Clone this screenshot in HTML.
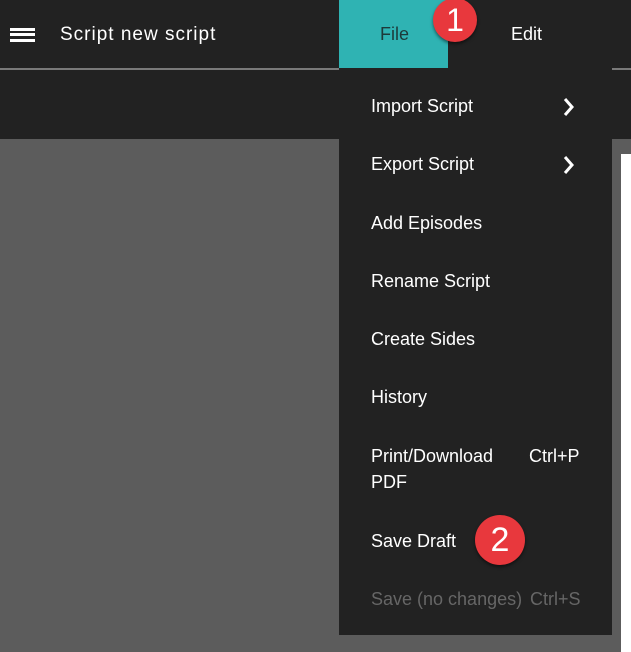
<!DOCTYPE html>
<html><head><style>
body{margin:0;width:631px;height:652px;position:relative;overflow:hidden;background:#5c5c5c;font-family:"Liberation Sans",sans-serif;}
.a{position:absolute}
.item{position:absolute;left:371px;color:#fff;font-size:18px;line-height:26px}
.chev{position:absolute;left:563px}
.badge{position:absolute;border-radius:50%;background:#e8383d;color:#fff;text-align:center;box-shadow:0 2px 3px rgba(0,0,0,.5)}
</style></head><body>
<div class="a" style="left:0;top:0;width:631px;height:139px;background:#222"></div>
<div class="a" style="left:0;top:68px;width:631px;height:2px;background:#7a7a7a"></div>
<div class="a" style="left:621px;top:154px;width:10px;height:498px;background:#fff"></div>
<div class="a" style="left:339px;top:0;width:109px;height:69px;background:#2fb3b3"></div>
<div class="a" style="left:339px;top:68px;width:273px;height:567px;background:#222"></div>
<div class="a" style="left:10px;top:28px;width:25px;height:3px;background:#fff;box-shadow:0 5px 0 #fff,0 11px 0 #fff"></div>
<div class="a" style="left:60px;top:24px;color:#fff;font-size:19px;letter-spacing:1px">Script new script</div>
<div class="a" style="left:380px;top:24px;color:#1d3a3a;font-size:18px">File</div>
<div class="a" style="left:511px;top:24px;color:#fff;font-size:18px">Edit</div>
<div class="badge" style="left:433px;top:-2px;width:44px;height:44px;line-height:44px;font-size:32px">1</div>
<div class="item" style="top:93px">Import Script</div>
<svg class="chev" style="top:97px" width="12" height="20"><path d="M2 2 L9 10 L2 18" stroke="#fff" stroke-width="3" fill="none"/></svg>
<div class="item" style="top:151px">Export Script</div>
<svg class="chev" style="top:155px" width="12" height="20"><path d="M2 2 L9 10 L2 18" stroke="#fff" stroke-width="3" fill="none"/></svg>
<div class="item" style="top:210px">Add Episodes</div>
<div class="item" style="top:268px">Rename Script</div>
<div class="item" style="top:326px">Create Sides</div>
<div class="item" style="top:384px">History</div>
<div class="item" style="top:443px">Print/Download<br>PDF</div>
<div class="item" style="top:443px;left:529px">Ctrl+P</div>
<div class="item" style="top:528px">Save Draft</div>
<div class="badge" style="left:475px;top:515px;width:50px;height:50px;line-height:50px;font-size:34px">2</div>
<div class="item" style="top:586px;color:#666">Save (no changes)</div>
<div class="item" style="top:586px;left:530px;color:#666">Ctrl+S</div>
</body></html>
